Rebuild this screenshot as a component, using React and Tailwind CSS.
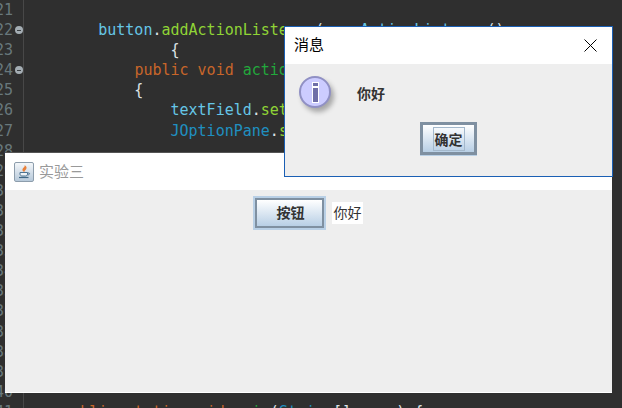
const C = {
  field: "text-[#66c6e6]",
  dark: "text-[#1f8fc0]",
  method: "text-[#8fd436]",
  fn: "text-[#22a83c]",
  kw: "text-[#c8662a]",
  plain: "text-[#dde3e6]",
};

const lines = [
  { n: 21, t: [] },
  { n: 22, fold: true, t: [["        ", C.plain], ["button", C.field], [".", C.plain], ["addActionListener", C.method], ["(", C.plain], ["new ", C.kw], ["ActionListener", C.field], ["()", C.plain]] },
  { n: 23, t: [["                {", C.plain]] },
  { n: 24, fold: true, t: [["            ", C.plain], ["public void ", C.kw], ["actionPerformed", C.fn], ["(ActionEvent e)", C.plain]] },
  { n: 25, t: [["            {", C.plain]] },
  { n: 26, t: [["                ", C.plain], ["textField", C.field], [".", C.plain], ["setText", C.method], ["(", C.plain]] },
  { n: 27, t: [["                ", C.plain], ["JOptionPane", C.dark], [".", C.plain], ["showMessageDialog", C.method], ["(", C.plain]] },
  { n: 28, t: [] }, { n: 29, t: [] }, { n: 30, t: [] }, { n: 31, t: [] }, { n: 32, t: [] },
  { n: 33, t: [] }, { n: 34, t: [] }, { n: 35, t: [] }, { n: 36, t: [] }, { n: 37, t: [] },
  { n: 38, t: [] }, { n: 39, t: [] }, { n: 40, t: [] },
  { n: 41, fold: true, t: [["    ", C.plain], ["public static void ", C.kw], ["main", C.fn], ["(", C.plain], ["String", C.dark], ["[] args) {", C.plain]] },
];

function Row({ n, fold, t }) {
  return (
    <div className="flex h-[20.1px] leading-5 shrink-0">
      <div className="relative w-[24px] shrink-0 border-r border-[#484848]">
        <span className="absolute right-[10px] top-0 text-[#68787c]">{n}</span>
        {fold && (
          <span className="absolute left-[15px] top-[6px] flex h-2 w-2 items-center justify-center rounded-full bg-[#a4adb3]">
            <span className="h-px w-1 bg-[#3a3f42]" />
          </span>
        )}
      </div>
      <div className="whitespace-pre pl-[2px]">
        {t.map(([s, c], i) => (
          <span key={i} className={c}>{s}</span>
        ))}
      </div>
    </div>
  );
}

function JavaIcon() {
  return (
    <span className="flex h-5 w-5 shrink-0 items-center justify-center rounded-[2px] border border-[#8d9dac] bg-gradient-to-b from-[#f4f7fa] to-[#b7c9da]">
      <svg width="16" height="16" viewBox="0 0 16 16">
        <path d="M8.500 1c1.200 2-2.500 3-2 5.200.2 1 1 1.300 2 1.800C8 6.500 11 5.500 10.500 3.200 10.300 2.200 9.300 1.500 8.500 1z" fill="#e8803a" />
        <path d="M4 8.500h7.500v1.500c0 1.200-1 2-2 2H6c-1 0-2-.8-2-2z" fill="#eef3f7" stroke="#4d7391" strokeWidth="1" />
        <path d="M11.500 9h1.500c.9 0 .9 2-1.500 2" fill="none" stroke="#4d7391" strokeWidth="1" />
        <path d="M3 13.500h9.500" stroke="#3f6785" strokeWidth="1.200" />
      </svg>
    </span>
  );
}

export default function App() {
  return (
    <div className="relative h-[408px] w-[622px] overflow-hidden bg-[#2f2f2f] font-['DejaVu_Sans_Mono',monospace] text-[15px]">
      <div className="flex flex-col">
        {lines.map((l) => <Row key={l.n} {...l} />)}
      </div>

      {/* main window */}
      <div className="absolute left-[5px] top-[153px] flex h-[240px] w-[607px] flex-col border-b border-white bg-[#eeeeee] font-['Noto_Sans_CJK_SC',sans-serif] shadow-[0_-1px_0_#555]">
        <div className="flex h-[37px] shrink-0 items-center gap-[5px] bg-white pl-[9px] pt-[1px]">
          <JavaIcon />
          <span className="pb-[4px] text-[15px] leading-none text-[#999]">实验三</span>
        </div>
        <div className="flex justify-center pt-[6px]">
          <div className="flex items-start gap-[6px] pr-[1px]">
            <button className="flex h-[34px] w-[73px] items-center justify-center border-2 border-[#b9d0e6] p-0">
              <span className="flex h-full w-full items-center justify-center border-2 border-[#7f90a1] bg-gradient-to-b from-white to-[#b8cfe5] pb-[2px] pl-[2px] text-sm font-semibold leading-none text-[#333]">按钮</span>
            </button>
            <span className="mt-[6px] flex h-[22px] w-[31px] items-center justify-center bg-white pb-[2px] text-sm leading-none text-[#333]">你好</span>
          </div>
        </div>
      </div>

      {/* message dialog */}
      <div className="absolute left-[284px] top-[26px] flex h-[151px] w-[329px] flex-col border border-[#1a5fb4] bg-[#eeeeee] font-['Noto_Sans_CJK_SC',sans-serif]">
        <div className="flex h-[37px] shrink-0 items-center justify-between bg-white pl-[9px] pr-[15px]">
          <span className="pb-[5px] text-[15px] leading-none text-black">消息</span>
          <svg width="13" height="13" viewBox="0 0 13 13">
            <path d="M.5.500l12 12M12.500.500l-12 12" stroke="#000" strokeWidth="1" fill="none" />
          </svg>
        </div>
        <div className="flex items-center pl-[14px] pt-[12px]">
          <span className="relative flex h-8 w-8 shrink-0 items-center justify-center rounded-full border-2 border-[#9090c4] bg-[#ccccff] shadow-[3px_4px_5px_rgba(0,0,0,0.3)]">
            <span className="flex h-[21px] w-[7px] flex-col gap-[2px] bg-white px-[1px] py-[1px]">
              <span className="h-[3px] w-full bg-[#6f6fa8]" />
              <span className="w-full flex-1 bg-[#6f6fa8]" />
            </span>
          </span>
          <span className="ml-[26px] mt-[1px] text-sm font-semibold leading-none text-[#333]">你好</span>
        </div>
        <div className="flex justify-center pt-[14px]">
          <button className="flex h-[34px] w-[57px] flex-col p-0">
            <span className="flex h-[33px] w-full items-center justify-center border-[3px] border-[#7f90a1] bg-gradient-to-b from-white to-[#b8cfe5]">
              <span className="flex h-[24px] w-[32px] items-center justify-center border border-[#a3b8cc] text-sm font-semibold leading-none text-[#333]">确定</span>
            </span>
            <span className="h-px w-full bg-[#b9d0e6]" />
          </button>
        </div>
      </div>
    </div>
  );
}
